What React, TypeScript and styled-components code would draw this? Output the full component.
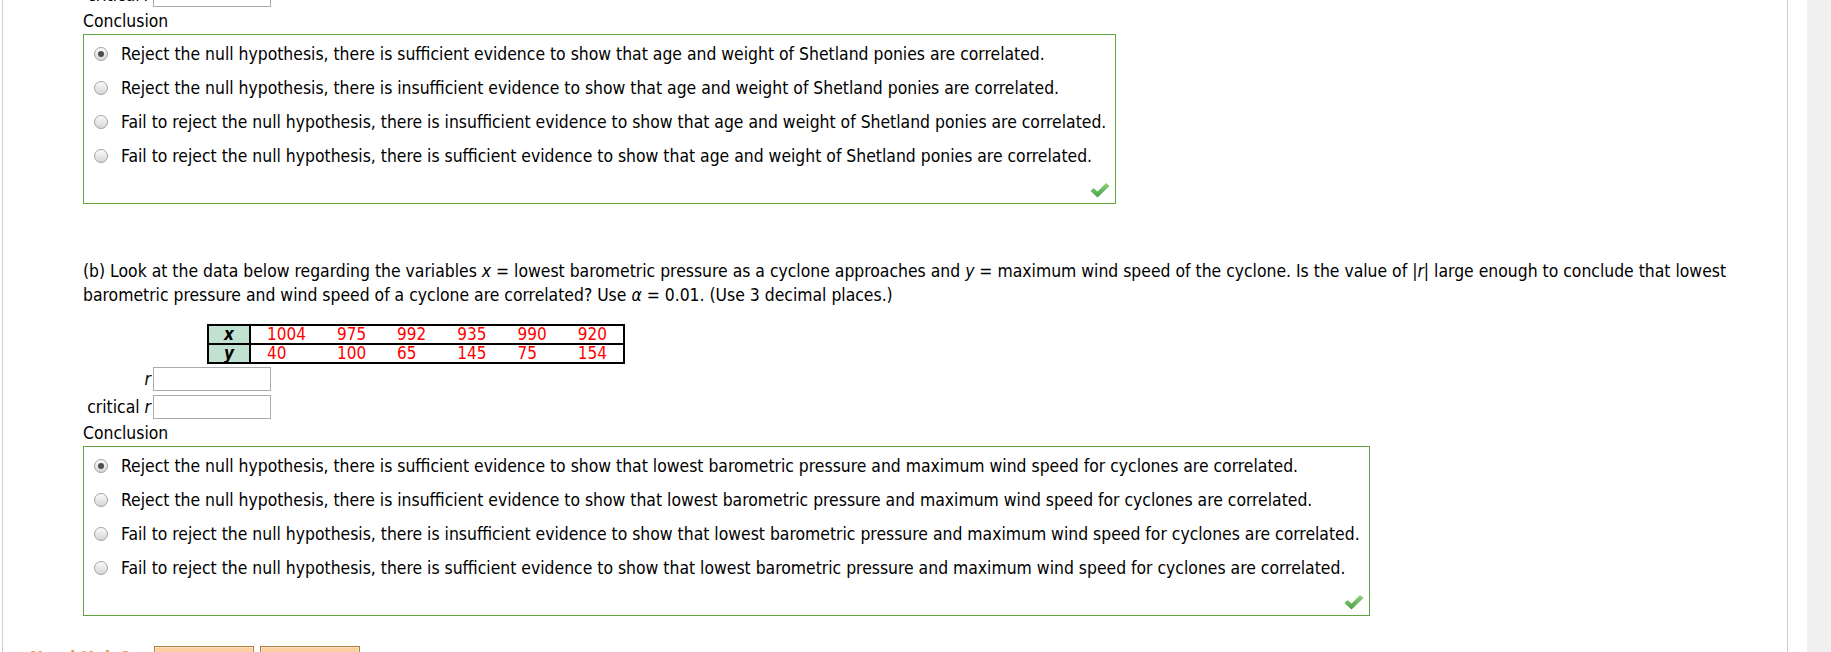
import React from 'react';
import styled, { createGlobalStyle } from 'styled-components';

const GlobalStyle = createGlobalStyle`
  html, body {
    margin: 0;
    padding: 0;
    background: #fff;
  }
  body {
    font-family: 'DejaVu Sans Condensed', 'DejaVu Sans', sans-serif;
    font-size: 17.4px;
    color: #000;
  }
`;

const Page = styled.div`
  display: flex;
  height: 652px;
  overflow: hidden;
`;

const Panel = styled.div`
  margin-left: 2px;
  width: 1786px;
  box-sizing: border-box;
  border-left: 1px solid #cfcfcf;
  border-right: 1px solid #cfcfcf;
  display: flex;
  flex-direction: column;
`;

const Rail = styled.div`
  margin-left: auto;
  width: 24px;
  background: #f0f0f0;
`;

const Content = styled.div`
  margin-top: -17px;
  padding-left: 80px;
  display: flex;
  flex-direction: column;
  align-items: flex-start;
`;

const FieldRow = styled.div<{ $gap?: number }>`
  display: grid;
  grid-template-columns: 68px 118px;
  column-gap: 2px;
  align-items: center;
  margin-top: ${(p) => p.$gap ?? 0}px;
`;

const FieldLabel = styled.span`
  text-align: right;
  line-height: 24px;
  white-space: nowrap;
`;

const Answer = styled.div`
  height: 24px;
  box-sizing: border-box;
  border: 1px solid #ababab;
  background: #fff;
`;

const Heading = styled.div`
  margin-top: 4px;
  line-height: 20px;
`;

const ChoiceBox = styled.div`
  margin-top: 3px;
  border: 1px solid #63a23e;
  padding: 2px 9px 0 10px;
  width: fit-content;
  display: flex;
  flex-direction: column;
`;

const Choice = styled.label`
  display: flex;
  align-items: center;
  gap: 13px;
  height: 34px;
  white-space: nowrap;
`;

const Radio = styled.span<{ $checked?: boolean }>`
  position: relative;
  flex: none;
  width: 14px;
  height: 14px;
  box-sizing: border-box;
  border-radius: 50%;
  border: 1px solid #a3a3a3;
  background: linear-gradient(#fbfbfb, #d6d6d6);

  &::after {
    content: '';
    display: ${(p) => (p.$checked ? 'block' : 'none')};
    position: absolute;
    left: 3px;
    top: 3px;
    width: 6px;
    height: 6px;
    border-radius: 50%;
    background: #4d4d4d;
  }
`;

const CheckRow = styled.div`
  height: 30px;
  display: flex;
  justify-content: flex-end;
  align-items: flex-start;
  padding-top: 9px;
  margin-right: -4px;
  box-sizing: border-box;
`;

const Prompt = styled.p`
  margin: 55px 0 0;
  line-height: 24px;
  max-width: 1704px;
`;

const DataTable = styled.table`
  margin: 17px 0 0 124px;
  border-collapse: collapse;
  border: 2px solid #000;
  font-size: 17px;
  line-height: 17px;
`;

const HeadCell = styled.th`
  width: 40px;
  padding: 0;
  background: #c1e1d1;
  border: 2px solid #000;
  font-style: italic;
  font-weight: bold;
  text-align: center;
`;

const ValueCell = styled.td<{ $first?: boolean }>`
  padding: 0 16px 0 ${(p) => (p.$first ? 16 : 15)}px;
  color: #ff0000;
  text-align: left;
  border-top: 2px solid #000;
  border-bottom: 2px solid #000;
`;

const Footer = styled.div`
  margin-top: 30px;
  padding-left: 27px;
  display: flex;
  align-items: flex-start;
`;

const HelpLabel = styled.span`
  margin-top: 2px;
  width: 124px;
  color: #e99a55;
  font-weight: bold;
  line-height: 20px;
`;

const HelpButton = styled.button`
  width: 100px;
  height: 26px;
  margin-right: 6px;
  border: 1px solid #b27d3c;
  box-shadow: inset 0 0 0 1px #fde2c2;
  background: #fbd1a2;
  padding: 8px 0 0;
  font: inherit;
  line-height: 18px;
`;

const Check = () => (
  <svg width="20" height="16" viewBox="0 0 20 16">
    <defs>
      <linearGradient id="chk" x1="0" y1="0" x2="0" y2="1">
        <stop offset="0" stopColor="#93d27f" />
        <stop offset="1" stopColor="#45a043" />
      </linearGradient>
    </defs>
    <path d="M0.5 9 L3.5 6 L7.5 9.5 L16 1 L19.5 4 L7.5 15.5 Z" fill="url(#chk)" />
  </svg>
);

const choicesA = [
  'Reject the null hypothesis, there is sufficient evidence to show that age and weight of Shetland ponies are correlated.',
  'Reject the null hypothesis, there is insufficient evidence to show that age and weight of Shetland ponies are correlated.',
  'Fail to reject the null hypothesis, there is insufficient evidence to show that age and weight of Shetland ponies are correlated.',
  'Fail to reject the null hypothesis, there is sufficient evidence to show that age and weight of Shetland ponies are correlated.',
];

const choicesB = [
  'Reject the null hypothesis, there is sufficient evidence to show that lowest barometric pressure and maximum wind speed for cyclones are correlated.',
  'Reject the null hypothesis, there is insufficient evidence to show that lowest barometric pressure and maximum wind speed for cyclones are correlated.',
  'Fail to reject the null hypothesis, there is insufficient evidence to show that lowest barometric pressure and maximum wind speed for cyclones are correlated.',
  'Fail to reject the null hypothesis, there is sufficient evidence to show that lowest barometric pressure and maximum wind speed for cyclones are correlated.',
];

const xs = [1004, 975, 992, 935, 990, 920];
const ys = [40, 100, 65, 145, 75, 154];

const Choices = ({ items }: { items: string[] }) => (
  <ChoiceBox>
    {items.map((text, i) => (
      <Choice key={i}>
        <Radio $checked={i === 0} />
        {text}
      </Choice>
    ))}
    <CheckRow>
      <Check />
    </CheckRow>
  </ChoiceBox>
);

export default function App() {
  return (
    <>
      <GlobalStyle />
      <Page>
        <Panel>
          <Content>
            <FieldRow>
              <FieldLabel>
                critical <i>r</i>
              </FieldLabel>
              <Answer />
            </FieldRow>
            <Heading>Conclusion</Heading>
            <Choices items={choicesA} />

            <Prompt>
              (b) Look at the data below regarding the variables <i>x</i> = lowest barometric pressure as a
              cyclone approaches and <i>y</i> = maximum wind speed of the cyclone. Is the value of |<i>r</i>|
              large enough to conclude that lowest barometric pressure and wind speed of a cyclone are
              correlated? Use <i>α</i> = 0.01. (Use 3 decimal places.)
            </Prompt>

            <DataTable>
              <tbody>
                <tr>
                  <HeadCell>x</HeadCell>
                  {xs.map((v, i) => (
                    <ValueCell key={i} $first={i === 0}>
                      {v}
                    </ValueCell>
                  ))}
                </tr>
                <tr>
                  <HeadCell>y</HeadCell>
                  {ys.map((v, i) => (
                    <ValueCell key={i} $first={i === 0}>
                      {v}
                    </ValueCell>
                  ))}
                </tr>
              </tbody>
            </DataTable>

            <FieldRow $gap={3}>
              <FieldLabel>
                <i>r</i>
              </FieldLabel>
              <Answer />
            </FieldRow>
            <FieldRow $gap={4}>
              <FieldLabel>
                critical <i>r</i>
              </FieldLabel>
              <Answer />
            </FieldRow>
            <Heading>Conclusion</Heading>
            <Choices items={choicesB} />
          </Content>

          <Footer>
            <HelpLabel>Need Help?</HelpLabel>
            <HelpButton type="button">Read It</HelpButton>
            <HelpButton type="button">Watch It</HelpButton>
          </Footer>
        </Panel>
        <Rail />
      </Page>
    </>
  );
}
